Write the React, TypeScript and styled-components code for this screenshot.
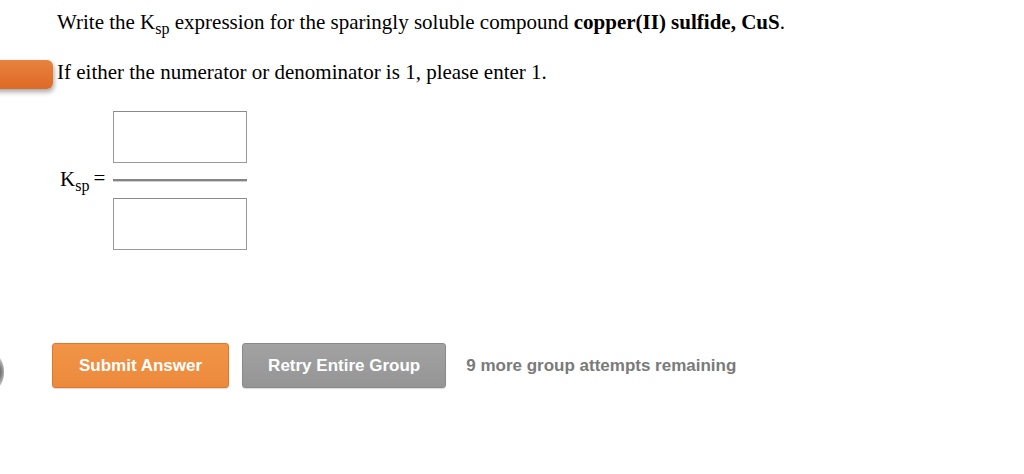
import React from "react";
import styled, { createGlobalStyle } from "styled-components";

const GlobalStyle = createGlobalStyle`
  html, body {
    margin: 0;
    padding: 0;
    background: #ffffff;
  }
  body {
    font-family: "Liberation Serif", "Times New Roman", serif;
    color: #000;
  }
`;

const Page = styled.div`
  position: relative;
  width: 1024px;
  height: 474px;
  overflow: hidden;
  padding-left: 57px;
  box-sizing: border-box;
`;

const Question = styled.p`
  margin: 0;
  padding-top: 9px;
  font-size: 21px;
  line-height: 26px;
`;

const Sub = styled.sub`
  font-size: 16px;
  line-height: 0;
  vertical-align: -5px;
`;

const InstructionRow = styled.p`
  margin: 24px 0 0;
  font-size: 21px;
  line-height: 26px;
`;

const SideTab = styled.div`
  position: absolute;
  left: -10px;
  top: 60px;
  width: 63px;
  height: 29px;
  border-radius: 6px;
  background: linear-gradient(#e8823e, #dd6a26);
  box-shadow: 1px 3px 5px rgba(0, 0, 0, 0.35);
`;

const EdgeShadow = styled.div`
  position: absolute;
  left: -18px;
  top: 354px;
  width: 22px;
  height: 36px;
  border-radius: 50%;
  background: radial-gradient(circle at 30% 50%, rgba(0, 0, 0, 0.75) 35%, rgba(0, 0, 0, 0.2) 75%, transparent 100%);
`;

const FractionRow = styled.div`
  display: flex;
  align-items: center;
  margin-top: 26px;
`;

const Label = styled.span`
  font-size: 21px;
  line-height: 26px;
  margin-left: 3px;
  margin-top: -4px;
`;

const Equals = styled.span`
  font-size: 21px;
  margin: -4px 8px 0 4px;
`;

const Fraction = styled.div`
  display: flex;
  flex-direction: column;
  width: 134px;
`;

const Box = styled.div`
  height: 52px;
  border: 1px solid #9a9a9a;
  border-top-color: #8a8a8a;
  box-sizing: border-box;
  background: #fff;
`;

const Bar = styled.div`
  height: 2px;
  background: #858585;
  border-bottom: 1px solid #cfcfcf;
  margin: 16px 0 16px;
`;

const Actions = styled.div`
  display: flex;
  align-items: center;
  margin: 93px 0 0 -5px;
`;

const Button = styled.button<{ $tone: "orange" | "gray" }>`
  height: 45px;
  padding: 0 ${(p) => (p.$tone === "orange" ? "26px" : "25px")};
  border-radius: 3px;
  font-family: "Liberation Sans", Arial, sans-serif;
  font-weight: bold;
  font-size: 17px;
  color: #fff;
  margin-right: 13px;
  border: 1px solid ${(p) => (p.$tone === "orange" ? "#e3762a" : "#8a8a8a")};
  background: ${(p) =>
    p.$tone === "orange"
      ? "linear-gradient(#f19446, #ec8a3c)"
      : "linear-gradient(#a2a2a2, #959595)"};
  box-shadow: 0 1px 1px rgba(0, 0, 0, 0.15);
`;

const Remaining = styled.span`
  font-family: "Liberation Sans", Arial, sans-serif;
  font-weight: bold;
  font-size: 17px;
  color: #7a7a7a;
  margin-left: 7px;
`;

export default function App() {
  return (
    <>
      <GlobalStyle />
      <Page>
        <SideTab />
        <EdgeShadow />
        <Question>
          Write the K<Sub>sp</Sub> expression for the sparingly soluble compound{" "}
          <b>copper(II) sulfide, CuS</b>.
        </Question>
        <InstructionRow>If either the numerator or denominator is 1, please enter 1.</InstructionRow>
        <FractionRow>
          <Label>
            K<Sub>sp</Sub>
          </Label>
          <Equals>=</Equals>
          <Fraction>
            <Box />
            <Bar />
            <Box />
          </Fraction>
        </FractionRow>
        <Actions>
          <Button $tone="orange">Submit Answer</Button>
          <Button $tone="gray">Retry Entire Group</Button>
          <Remaining>9 more group attempts remaining</Remaining>
        </Actions>
      </Page>
    </>
  );
}
